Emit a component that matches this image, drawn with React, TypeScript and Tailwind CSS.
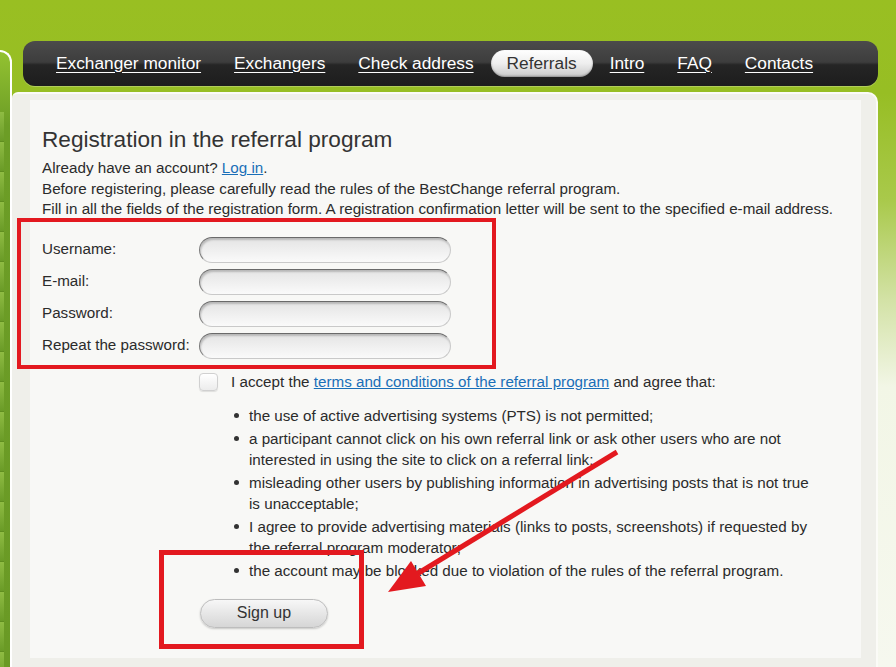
const navItems = [
  { label: "Exchanger monitor" },
  { label: "Exchangers" },
  { label: "Check address" },
  { label: "Referrals", active: true },
  { label: "Intro" },
  { label: "FAQ" },
  { label: "Contacts" },
];

const fields = ["Username:", "E-mail:", "Password:", "Repeat the password:"];

const rules = [
  "the use of active advertising systems (PTS) is not permitted;",
  "a participant cannot click on his own referral link or ask other users who are not interested in using the site to click on a referral link;",
  "misleading other users by publishing information in advertising posts that is not true is unacceptable;",
  "I agree to provide advertising materials (links to posts, screenshots) if requested by the referral program moderator;",
  "the account may be blocked due to violation of the rules of the referral program.",
];

const tiles = Array.from({ length: 22 });

export default function App() {
  return (
    <div
      className="relative w-[896px] h-[667px] overflow-hidden bg-[linear-gradient(to_bottom,#99bf22_0%,#97be24_14%,#a9c94b_30%,#d3e2a6_45%,#f2f6e6_58%,#f6f8ef_100%)] text-[#333]"
      style={{ fontFamily: "'Liberation Sans', Arial, sans-serif" }}
    >
      <div className="flex pt-[41px] h-full">
        {/* ── Left sidebar ── */}
        <div className="w-[12px] mt-[9px] shrink-0 rounded-tr-[12px] border-t-2 border-r-2 border-white bg-[linear-gradient(to_bottom,#93c231_0%,#6c9d26_12%,#6a9a25_100%)] overflow-hidden">
          <div className="flex flex-col w-[4px] pt-[60px]">
            {tiles.map((_, i) => (
              <div
                key={i}
                className="h-[30px] border-b border-[#5f8e20] bg-gradient-to-b from-[#8fbc43] to-[#6a9b27]"
              />
            ))}
          </div>
        </div>

        {/* ── Main column ── */}
        <div className="flex flex-col flex-1 pr-[18px]">
          {/* Nav */}
          <nav className="ml-[11px] h-[45px] rounded-[12px] bg-[linear-gradient(to_bottom,#4b4b4b_0%,#3d3d3d_47%,#252525_53%,#1d1d1d_100%)] flex items-center pl-[17px] gap-[1px] shadow-[0_1px_0_rgba(255,255,255,0.25)]">
            {navItems.map(({ label, active }) =>
              active ? (
                <span
                  key={label}
                  className="h-[27px] flex items-center px-[16px] rounded-full bg-gradient-to-b from-white via-[#eeeeee] to-[#c9c9c9] text-[#333] text-[17.3px] shadow-[inset_0_-1px_2px_rgba(0,0,0,0.3)]"
                >
                  {label}
                </span>
              ) : (
                <a
                  key={label}
                  href="#"
                  className="px-[16px] text-[17.3px] text-white underline underline-offset-[3px] decoration-1"
                >
                  {label}
                </a>
              )
            )}
          </nav>

          {/* Panel */}
          <div className="mt-[6px] flex-1 rounded-tr-[10px] rounded-tl-[6px] border-t-2 border-r-2 border-[#fbfbf7] bg-[#efefea] pl-[18px] pr-[15px] pt-[6px]">
            <div className="bg-[#f8f8f6] pl-[12px] pt-[26px] pb-[30px] text-[15.2px] leading-[20.5px] text-[#2b2b2b]">
              <h1 className="text-[22.6px] leading-[28px] text-[#333] mb-[4px]">
                Registration in the referral program
              </h1>
              <p>
                Already have an account?{" "}
                <a href="#" className="text-[#1a6fb8] underline">
                  Log in
                </a>
                .
              </p>
              <p>Before registering, please carefully read the rules of the BestChange referral program.</p>
              <p>
                Fill in all the fields of the registration form. A registration confirmation letter will be
                sent to the specified e-mail address.
              </p>

              {/* Form fields */}
              <div className="mt-[17px] flex flex-col gap-[6px]">
                {fields.map((f) => (
                  <div key={f} className="flex items-center">
                    <span className="w-[157px]">{f}</span>
                    <div className="w-[252px] h-[26px] rounded-full border border-[#c9c9c9] border-t-[#6a6a6a] border-l-[#7a7a7a] bg-gradient-to-b from-[#e4e4e4] to-[#fafafa] shadow-[inset_1px_2px_2px_rgba(0,0,0,0.2)]" />
                  </div>
                ))}
              </div>

              {/* Accept */}
              <div className="mt-[13px] ml-[157px] flex items-center gap-[13px]">
                <div className="w-[19px] h-[18px] rounded-[4px] border border-[#d0d0d0] bg-gradient-to-b from-white to-[#ececec] shadow-[0_1px_1px_rgba(0,0,0,0.1)]" />
                <span>
                  I accept the{" "}
                  <a href="#" className="text-[#1a6fb8] underline">
                    terms and conditions of the referral program
                  </a>{" "}
                  and agree that:
                </span>
              </div>

              <ul className="mt-[13px] ml-[192px] w-[578px]">
                {rules.map((r) => (
                  <li key={r} className="flex mb-[2px] leading-[21px]">
                    <span className="w-[15px] shrink-0 pt-[8px]">
                      <span className="block w-[5px] h-[5px] rounded-full bg-[#333]" />
                    </span>
                    <span>{r}</span>
                  </li>
                ))}
              </ul>

              <button className="mt-[16px] ml-[158px] w-[128px] h-[29px] rounded-full border border-[#bdbdbd] bg-gradient-to-b from-[#f7f7f7] to-[#d6d6d6] text-[16px] text-[#333] shadow-[0_1px_2px_rgba(0,0,0,0.2)]">
                Sign up
              </button>
            </div>
          </div>
        </div>
      </div>

      {/* ── Annotation overlay ── */}
      <div className="absolute left-[17px] top-[218px] w-[479px] h-[151px] border-4 border-[#e3191f]" />
      <div className="absolute left-[159px] top-[550px] w-[205px] h-[99px] border-[5px] border-[#e3191f]" />
      <svg className="absolute left-0 top-0" width="896" height="667" viewBox="0 0 896 667">
        <line x1="617" y1="452" x2="412" y2="577" stroke="#e3191f" strokeWidth="5" />
        <polygon points="388,592 411,561 426,586" fill="#e3191f" />
      </svg>
    </div>
  );
}
